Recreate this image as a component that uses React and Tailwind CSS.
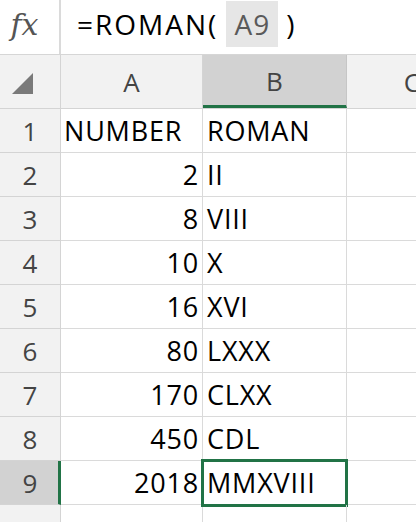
import React from 'react';

const rows = [
  { n: 1, a: 'NUMBER', b: 'ROMAN', head: true },
  { n: 2, a: '2', b: 'II' },
  { n: 3, a: '8', b: 'VIII' },
  { n: 4, a: '10', b: 'X' },
  { n: 5, a: '16', b: 'XVI' },
  { n: 6, a: '80', b: 'LXXX' },
  { n: 7, a: '170', b: 'CLXX' },
  { n: 8, a: '450', b: 'CDL' },
  { n: 9, a: '2018', b: 'MMXVIII', active: true },
  { n: '', a: '', b: '' },
];

const font = { fontFamily: '"Open Sans", "Noto Sans", sans-serif' };

const App = () => {
  return (
    <div
      className="w-[416px] h-[522px] overflow-hidden bg-white text-black"
      style={font}
    >
      {/* formula bar */}
      <div className="flex h-[55px] border-b border-[#d6d6d6]">
        <div className="w-[61px] shrink-0 border-r-2 border-[#dadada] flex items-center justify-center">
          <span
            className="italic text-[30px] leading-none text-[#555] -mt-[4px] -ml-[10px]"
            style={{ fontFamily: '"DejaVu Serif", "Liberation Serif", serif' }}
          >
            fx
          </span>
        </div>
        <div className="flex items-start pl-[16px] pt-[1px]">
          <div className="h-[46px] flex items-center text-[28px] leading-none tracking-[2px]">
            =ROMAN(
          </div>
          <div className="ml-[8px] h-[46px] w-[52px] bg-[#e6e6e6] flex items-center justify-center text-[28px] leading-none text-[#5a5a5a] tracking-[1px]">
            A9
          </div>
          <div className="ml-[8px] h-[46px] flex items-center text-[28px] leading-none">)</div>
        </div>
      </div>

      {/* column headers */}
      <div className="flex h-[54px] bg-[#f2f2f2] border-b border-[#d4d4d4] text-[#444] text-[26px] leading-none">
        <div className="w-[61px] shrink-0 border-r border-[#d4d4d4] relative">
          <svg className="absolute left-0 top-0" width="60" height="53" viewBox="0 0 60 53">
            <polygon points="33,18 33,39 12,39" fill="#7a7a7a" />
          </svg>
        </div>
        <div className="w-[142px] shrink-0 border-r border-[#d4d4d4] flex items-center justify-center">
          A
        </div>
        <div className="w-[144px] shrink-0 border-r border-[#c6c6c6] bg-[#d2d2d2] border-b-[3px] border-b-[#217346] flex items-center justify-center pt-[2px]">
          B
        </div>
        <div className="w-[130px] shrink-0 flex items-center justify-center">C</div>
      </div>

      {/* grid rows */}
      {rows.map((r, i) => (
        <div key={i} className="flex h-[44px]">
          <div
            className={
              r.active
                ? 'w-[61px] shrink-0 bg-[#d2d2d2] border-r-[3px] border-r-[#217346] border-b border-b-[#d4d4d4] flex items-center justify-center pl-[2px] text-[26px] leading-none text-[#444]'
                : 'w-[61px] shrink-0 bg-[#f2f2f2] border-r border-b border-[#d4d4d4] flex items-center justify-center text-[26px] leading-none text-[#444]'
            }
          >
            {r.n}
          </div>
          <div className="w-[142px] shrink-0 border-r border-b border-[#dadada] flex items-center text-[27px] leading-none tracking-[0.8px] pl-[3px] pr-[3px] justify-end">
            {r.head ? <span className="mr-auto">{r.a}</span> : r.a}
          </div>
          <div className="w-[144px] shrink-0 border-r border-b border-[#dadada] flex items-center text-[27px] leading-none tracking-[0.8px] pl-[4px] relative">
            {r.active && (
              <div className="absolute -left-[2px] -top-[2px] -right-[2px] -bottom-[3px] border-[3px] border-[#217346]" />
            )}
            <span className="relative">{r.b}</span>
          </div>
          <div className="w-[140px] shrink-0 border-b border-[#dadada]" />
        </div>
      ))}
    </div>
  );
};

export default App;
